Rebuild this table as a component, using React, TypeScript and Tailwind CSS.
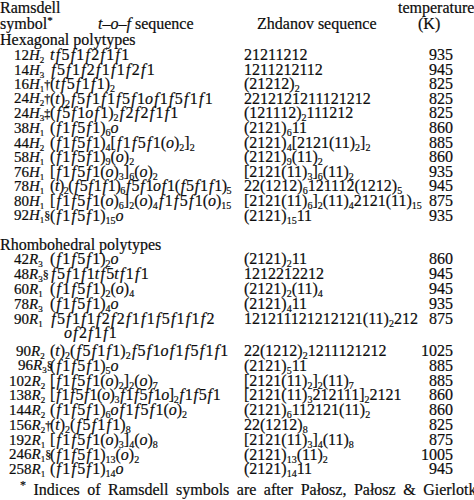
import React from "react";

type Row = { sym: string; pl: string; seq: string; zh: string; t: string; cont?: string; tight?: boolean };

function render(s: string, italic: string, padF: boolean, subCls: string): React.ReactNode[] {
  const out: React.ReactNode[] = [];
  let i = 0;
  let k = 0;
  while (i < s.length) {
    const c = s[i];
    if (c === "_") {
      let text = "";
      let j = i + 1;
      if (s[j] === "{") {
        const e = s.indexOf("}", j);
        text = s.slice(j + 1, e);
        j = e + 1;
      } else {
        text = s[j];
        j = j + 1;
      }
      out.push(
        <sub key={k++} className={subCls}>
          {text}
        </sub>
      );
      i = j;
      continue;
    }
    if (c === "†" || c === "‡" || c === "§") {
      out.push(
        <span key={k++} className="text-[12px]">
          {c}
        </span>
      );
    } else if (italic.includes(c)) {
      out.push(
        <i key={k++} className={padF && c === "f" ? "px-[1.25px]" : ""}>
          {c}
        </i>
      );
    } else {
      out.push(<span key={k++}>{c}</span>);
    }
    i++;
  }
  return out;
}

const hex: Row[] = [
  { sym: "12H_2", pl: "pl-[14px]", seq: "tf5f1f2f1f1", zh: "21211212", t: "935" },
  { sym: "14H_3", pl: "pl-[14px]", seq: "f5f1f2f1f1f2f1", zh: "1211212112", t: "945" },
  { sym: "16H_1†", pl: "pl-[14px]", seq: "(tf5f1f1)_2", zh: "(21212)_2", t: "825" },
  { sym: "24H_2†", pl: "pl-[14px]", seq: "(t)_2f5f1f1f5f1of1f5f1f1", zh: "2212121211121212", t: "825" },
  { sym: "24H_3‡", pl: "pl-[14px]", seq: "(f5f1of1)_2f2f2f1f1", zh: "(121112)_2111212", t: "825" },
  { sym: "38H_1", pl: "pl-[14px]", seq: "(f1f5f1)_6o", zh: "(2121)_611", t: "860" },
  { sym: "44H_2", pl: "pl-[14px]", seq: "(f1f5f1)_4[f1f5f1(o)_2]_2", zh: "(2121)_4[2121(11)_2]_2", t: "885" },
  { sym: "58H_1", pl: "pl-[14px]", seq: "(f1f5f1)_9(o)_2", zh: "(2121)_9(11)_2", t: "860" },
  { sym: "76H_1", pl: "pl-[14px]", seq: "[f1f5f1(o)_3]_6(o)_2", zh: "[2121(11)_3]_6(11)_2", t: "935" },
  { sym: "78H_1", pl: "pl-[14px]", seq: "(t)_2(f5f1f1)_6f5f1of1(f5f1f1)_5", zh: "22(1212)_6121112(1212)_5", t: "945", tight: true },
  { sym: "80H_1", pl: "pl-[14px]", seq: "[f1f5f1(o)_6]_2(o)_4f1f5f1(o)_{15}", zh: "[2121(11)_6]_2(11)_42121(11)_{15}", t: "875" },
  { sym: "92H_1§", pl: "pl-[14px]", seq: "(f1f5f1)_{15}o", zh: "(2121)_{15}11", t: "935" },
];

const rhombo: Row[] = [
  { sym: "42R_3", pl: "pl-[14px]", seq: "(f1f5f1)_2o", zh: "(2121)_211", t: "860" },
  { sym: "48R_3§", pl: "pl-[14px]", seq: "f5f1f1tf5tf1f1", zh: "1212212212", t: "945" },
  { sym: "60R_1", pl: "pl-[14px]", seq: "(f1f5f1)_2(o)_4", zh: "(2121)_2(11)_4", t: "945" },
  { sym: "78R_3", pl: "pl-[14px]", seq: "(f1f5f1)_4o", zh: "(2121)_411", t: "935" },
  { sym: "90R_1", pl: "pl-[14px]", seq: "f5f1f1f2f2f1f1f5f1f1f2", zh: "121211121212121(11)_2212", t: "875", cont: "of2f1f1" },
  { sym: "90R_2", pl: "pl-[16px]", seq: "(t)_2(f5f1f1)_2f5f1of1f5f1f1", zh: "22(1212)_21211121212", t: "1025" },
  { sym: "96R_3§", pl: "pl-[18px]", seq: "(f1f5f1)_5o", zh: "(2121)_511", t: "885" },
  { sym: "102R_2", pl: "pl-[9px]", seq: "[f1f5f1(o)_2]_2(o)_7", zh: "[2121(11)_2]_2(11)_7", t: "885" },
  { sym: "138R_2", pl: "pl-[9px]", seq: "[f1f5f1(o)_3f1f5f1o]_2f1f5f1", zh: "[2121(11)_3212111]_22121", t: "860", tight: true },
  { sym: "144R_2", pl: "pl-[9px]", seq: "(f1f5f1)_6of1f5f1(o)_2", zh: "(2121)_6112121(11)_2", t: "860" },
  { sym: "156R_2†", pl: "pl-[9px]", seq: "(t)_2(f5f1f1)_8", zh: "22(1212)_8", t: "825" },
  { sym: "192R_1", pl: "pl-[9px]", seq: "[f1f5f1(o)_3]_4(o)_8", zh: "[2121(11)_3]_4(11)_8", t: "875" },
  { sym: "246R_1§", pl: "pl-[9px]", seq: "(f1f5f1)_{13}(o)_2", zh: "(2121)_{13}(11)_2", t: "1005" },
  { sym: "258R_1", pl: "pl-[9px]", seq: "(f1f5f1)_{14}o", zh: "(2121)_{14}11", t: "945" },
];

function DataRow({ r, h }: { r: Row; h: string }) {
  return (
    <>
      <div className={"flex items-center whitespace-nowrap " + h}>
        <div className={"w-[50px] shrink-0 text-[15px] " + r.pl}>{render(r.sym, "HR", false, "text-[9px] bottom-[-3px]")}</div>
        <div className={"w-[194px] shrink-0 " + (r.tight ? "tracking-[-0.45px]" : "")}>
          {render(r.seq, "fot", true, "text-[10px] bottom-[-3px]")}
        </div>
        <div className="w-[169px] shrink-0">{render(r.zh, "", false, "text-[10px] bottom-[-3px]")}</div>
        <div className="w-[40px] shrink-0 text-right">{r.t}</div>
      </div>
      {r.cont && (
        <div className={"mb-[3px] flex items-center whitespace-nowrap " + h}>
          <div className="w-[64px] shrink-0" />
          <div>{render(r.cont, "fot", true, "text-[10px] bottom-[-3px]")}</div>
        </div>
      )}
    </>
  );
}

export default function App() {
  return (
    <div className="h-[500px] w-[474px] overflow-hidden bg-white font-['Liberation_Serif',serif] text-[16px] text-[#0c0c0c] [-webkit-text-stroke:0.2px_#0c0c0c]">
      <div className="flex h-[16px] items-center whitespace-nowrap leading-[16px]">
        <div className="w-[398px] shrink-0">Ramsdell</div>
        <div>temperature</div>
      </div>
      <div className="flex h-[16px] items-center whitespace-nowrap leading-[16px]">
        <div className="w-[98px] shrink-0">
          symbol<sup className="text-[11px]">*</sup>
        </div>
        <div className="w-[159px] shrink-0">
          <i>t</i>–<i>o</i>–<i>f</i> sequence
        </div>
        <div className="w-[161px] shrink-0">Zhdanov sequence</div>
        <div>(K)</div>
      </div>
      <div className="flex h-[16px] items-center whitespace-nowrap leading-[16px]">Hexagonal polytypes</div>
      {hex.map((r) => (
        <DataRow key={r.sym} r={r} h="h-[14.6px] leading-[14.6px]" />
      ))}
      <div className="h-[14.6px]" />
      <div className="flex h-[14.6px] items-center whitespace-nowrap leading-[14.6px]">Rhombohedral polytypes</div>
      {rhombo.map((r) => (
        <DataRow key={r.sym} r={r} h="h-[14.8px] leading-[14.8px]" />
      ))}
      <div className="mt-[6px] flex h-[14.8px] items-center whitespace-nowrap pl-[20px] leading-[14.8px] [word-spacing:3.5px]">
        <sup className="text-[12px]">*</sup>&nbsp;Indices of Ramsdell symbols are after Pałosz, Pałosz &amp; Gierlotka
      </div>
    </div>
  );
}
